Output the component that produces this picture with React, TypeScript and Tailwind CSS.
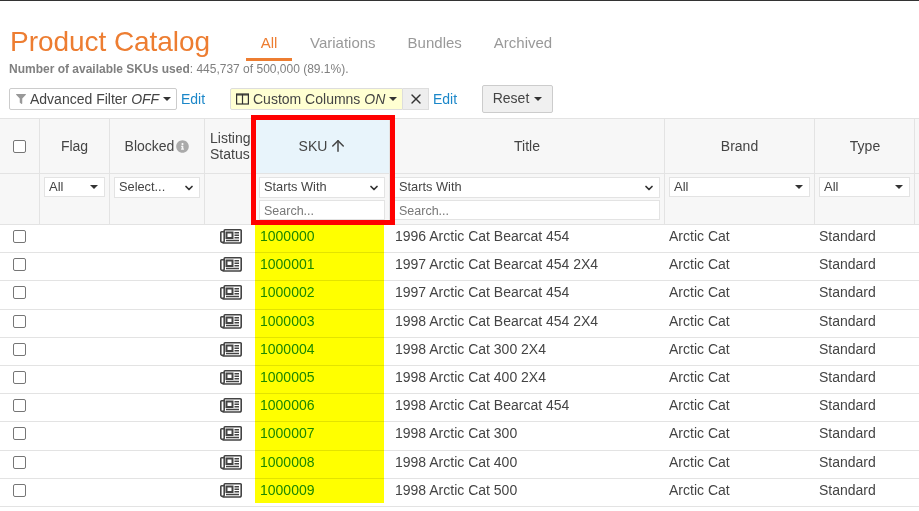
import { ArrowUp, ChevronDown, X } from "lucide-react";
import { FaFilter, FaInfoCircle } from "react-icons/fa";

const titles = [
  "1996 Arctic Cat Bearcat 454",
  "1997 Arctic Cat Bearcat 454 2X4",
  "1997 Arctic Cat Bearcat 454",
  "1998 Arctic Cat Bearcat 454 2X4",
  "1998 Arctic Cat 300 2X4",
  "1998 Arctic Cat 400 2X4",
  "1998 Arctic Cat Bearcat 454",
  "1998 Arctic Cat 300",
  "1998 Arctic Cat 400",
  "1998 Arctic Cat 500",
];

function Caret() {
  return <span className="inline-block w-0 h-0 border-x-[4px] border-x-transparent border-t-[4px] border-t-[#333]" />;
}

function Check() {
  return <span className="block w-[13px] h-[13px] border border-[#767676] rounded-[2px] bg-white mx-auto" />;
}

function Newspaper() {
  return (
    <svg width="22" height="15" viewBox="0 0 22 15" fill="none" stroke="#444" className="block mx-auto translate-x-[1px]">
      <path d="M4 2.7H1.6a.8.8 0 0 0-.8.8v8.7a1.8 1.8 0 0 0 3.4 0V1.6a.8.8 0 0 1 .8-.8h15.4a.8.8 0 0 1 .8.8v10.6a1.8 1.8 0 0 1-1.8 1.8H2.6" strokeWidth="1.6" />
      <rect x="6.5" y="3.5" width="6" height="5.5" strokeWidth="2" />
      <path d="M14.5 3.7h4.5M14.5 6.2h4.5M14.5 8.7h4.5M6 11.4h13" strokeWidth="1.5" />
    </svg>
  );
}

function Chevron({ text }: { text: string }) {
  return (
    <div className="flex items-center justify-between h-[21px] bg-white border border-[#e3e3e3] pl-[4px] pr-[4px] text-[12.8px] leading-none text-[#444]">
      <span>{text}</span>
      <ChevronDown size={12} strokeWidth={3.5} className="text-[#333]" />
    </div>
  );
}

function DropAll({ text }: { text: string }) {
  return (
    <div className="flex items-center justify-between h-[20px] pb-[1px] bg-white border border-[#e3e3e3] pl-[4px] pr-[6px] text-[13px] leading-none text-[#444]">
      <span>{text}</span>
      <Caret />
    </div>
  );
}

function SearchBox() {
  return (
    <input
      placeholder="Search..."
      className="mt-[2px] block w-full h-[20px] pt-[1px] bg-white border border-[#e3e3e3] px-[4px] text-[12.5px] outline-none placeholder:text-[#777]"
    />
  );
}

const thBase = "border border-[#e3e3e3] font-normal text-[14px] text-[#444] align-middle p-0";
const th = thBase + " bg-[#f7f7f7] text-center";
const tf = "border border-[#e3e3e3] bg-[#f7f7f7] align-top px-[4px] pt-[3px] pb-0";
const td = "border-y border-[#e3e3e3] h-[28.2px] p-0 pb-[4px] text-[14px] align-middle";
const tdText = td + " text-[#444]";

export default function App() {
  return (
    <div className="relative w-[919px] h-[511px] overflow-hidden bg-white font-['Liberation_Sans',Arial,sans-serif] border-t border-[#333]">
      <div className="flex items-end pl-[10px] h-[60px]">
        <h1 className="text-[28px] leading-none font-normal text-[#ed7d31] pb-[5px] w-[236px] tracking-[-0.05px]">Product Catalog</h1>
        <nav className="flex text-[15px] text-[#999] leading-none">
          <a className="w-[46px] text-center text-[#ed7d31] pb-[8px] border-b-[3px] border-[#ed7d31]">All</a>
          <a className="ml-[18px] pb-[8px]">Variations</a>
          <a className="ml-[32px] pb-[8px]">Bundles</a>
          <a className="ml-[32px] pb-[8px]">Archived</a>
        </nav>
      </div>
      <p className="pl-[9px] mt-[1px] text-[12px] leading-[14px] text-[#808080]">
        <b>Number of available SKUs used</b>: 445,737 of 500,000 (89.1%).
      </p>
      <div className="flex items-center pl-[9px] h-[29px] mt-[8px] text-[14px] text-[#444]">
        <div className="flex items-center w-[168px] h-[22px] border border-[#ccc] rounded-[2px] pl-[6px] gap-[4px] whitespace-nowrap">
          <FaFilter size={10} className="text-[#999]" />
          <span className="pt-[1px]">Advanced Filter <i>OFF</i></span>
          <Caret />
        </div>
        <a className="ml-[4px] pt-[1px] text-[#1b87c9] w-[49px]">Edit</a>
        <div className="flex items-center w-[173px] h-[22px] border border-[#ddd] bg-[#ffffd2] rounded-l-[2px] pl-[5px] gap-[4px] whitespace-nowrap">
          <svg width="13" height="12" viewBox="0 0 13 12" fill="none" stroke="#333" strokeWidth="1.2">
            <rect x="0.6" y="1" width="11.8" height="10" />
            <path d="M6.5 1v10M0.6 1.8h11.8" />
          </svg>
          <span className="pt-[1px]">Custom Columns <i>ON</i></span>
          <Caret />
        </div>
        <div className="flex items-center justify-center w-[26px] h-[22px] bg-[#eee] border border-[#ddd] border-l-0">
          <X size={16} strokeWidth={2} className="text-[#333]" />
        </div>
        <a className="ml-[4px] pt-[1px] text-[#1b87c9] w-[49px]">Edit</a>
        <button className="flex items-center justify-center gap-[5px] w-[71px] h-[28px] bg-[#f0f0f0] border border-[#ccc] rounded-[2px]">
          Reset <Caret />
        </button>
      </div>

      <table className="table-fixed border-collapse w-[925px] mt-[5px] -ml-px">
        <colgroup>
          <col className="w-[40px]" />
          <col className="w-[70px]" />
          <col className="w-[95px]" />
          <col className="w-[50px]" />
          <col className="w-[135px]" />
          <col className="w-[275px]" />
          <col className="w-[150px]" />
          <col className="w-[100px]" />
          <col className="w-[10px]" />
        </colgroup>
        <thead>
          <tr className="h-[55px]">
            <th className={th}><Check /></th>
            <th className={th}>Flag</th>
            <th className={th}>
              <span className="inline-flex items-center gap-[2px]">Blocked<FaInfoCircle size={13} className="text-[#aaa]" /></span>
            </th>
            <th className={thBase + " bg-[#f7f7f7] text-left pl-[5px] leading-[16px]"}>Listing Status</th>
            <th className={thBase + " bg-[#e8f4fb] text-center pl-[2px]"}>
              <span className="inline-flex items-center gap-[2px]">SKU <ArrowUp size={18} strokeWidth={2} className="text-[#444]" /></span>
            </th>
            <th className={th}>Title</th>
            <th className={th}>Brand</th>
            <th className={thBase + " bg-[#f7f7f7] text-center pl-[1px]"}>Type</th>
            <th className={th} />
          </tr>
          <tr className="h-[51px]">
            <td className={tf} />
            <td className={tf}><DropAll text="All" /></td>
            <td className={tf}><Chevron text="Select..." /></td>
            <td className={tf} />
            <td className={tf}><Chevron text="Starts With" /><SearchBox /></td>
            <td className={tf}><Chevron text="Starts With" /><SearchBox /></td>
            <td className={tf}><DropAll text="All" /></td>
            <td className={tf}><DropAll text="All" /></td>
            <td className={tf} />
          </tr>
        </thead>
        <tbody>
          {titles.map((t, i) => (
            <tr key={t + i}>
              <td className={td}><Check /></td>
              <td className={td} />
              <td className={td} />
              <td className={td}><Newspaper /></td>
              <td className={td + " pl-[5.5px] text-[#1b87c9]"}>{1000000 + i}</td>
              <td className={tdText + " pl-[5.5px]"}>{t}</td>
              <td className={tdText + " pl-[4.5px]"}>Arctic Cat</td>
              <td className={tdText + " pl-[4.5px]"}>Standard</td>
              <td className={td} />
            </tr>
          ))}
        </tbody>
      </table>

      <div className="absolute left-[255px] top-[224px] w-[129px] h-[278px] bg-[#ffff00] mix-blend-multiply" />
      <div className="absolute left-[251px] top-[114px] w-[144px] h-[110px] border-[5px] border-[#ff0000]" />
    </div>
  );
}
